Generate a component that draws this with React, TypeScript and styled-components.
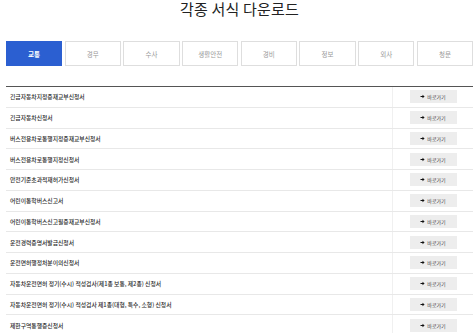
import React from 'react';
import styled, { createGlobalStyle } from 'styled-components';

const GlobalStyle = createGlobalStyle`
    html, body {
        margin: 0;
        padding: 0;
        background: #fff;
    }
    body {
        font-family: "Noto Sans CJK KR", "Noto Sans", sans-serif;
        color: #333;
    }
`;

const StyledPage = styled.div`
    width: 467px;
    margin-left: 6px;
    height: 333px;
    overflow: hidden;
`;

const StyledTitle = styled.h1`
    margin: 0;
    height: 41px;
    font-size: 15px;
    line-height: 18px;
    font-weight: 400;
    color: #222;
    text-align: center;
    letter-spacing: 0.2px;
`;

const StyledTabList = styled.ul`
    display: grid;
    grid-template-columns: repeat(8, 1fr);
    gap: 2.5px;
    margin: 0 0 20px;
    padding: 0;
    list-style: none;
`;

const StyledTab = styled.li<{ $active?: boolean }>`
    display: flex;
    align-items: center;
    justify-content: center;
    height: 25px;
    box-sizing: border-box;
    border: 1px solid ${(p) => (p.$active ? '#2b5fd1' : '#dedede')};
    background: ${(p) => (p.$active ? '#2b5fd1' : '#fff')};
    color: ${(p) => (p.$active ? '#fff' : '#999')};
    font-size: 6.5px;
    font-weight: ${(p) => (p.$active ? 700 : 400)};
`;

const StyledTable = styled.ul`
    margin: 0;
    padding: 0;
    list-style: none;
    border-top: 1.5px solid #555;
`;

const StyledRow = styled.li`
    display: flex;
    height: 20.75px;
    box-sizing: border-box;
    border-bottom: 1px solid #e8e8e8;
`;

const StyledName = styled.div`
    flex: 1;
    display: flex;
    align-items: center;
    padding-left: 4px;
    font-size: 5.8px;
    font-weight: 500;
    color: #2a2a2a;
    white-space: nowrap;
`;

const StyledCell = styled.div`
    width: 80px;
    display: flex;
    align-items: center;
    justify-content: center;
    border-left: 1px solid #f0f0f0;
`;

const StyledButton = styled.a`
    display: flex;
    align-items: center;
    justify-content: center;
    gap: 2px;
    width: 47px;
    height: 13px;
    background: #ededed;
    color: #444;
    font-size: 5px;
    text-decoration: none;
    svg {
        width: 5px;
        height: 5px;
    }
`;

const tabs = ['교통', '경무', '수사', '생활안전', '경비', '정보', '외사', '청문'];

const forms = [
    '긴급자동차지정증재교부신청서',
    '긴급자동차신청서',
    '버스전용차로통행지정증재교부신청서',
    '버스전용차로통행지정신청서',
    '안전기준초과적재허가신청서',
    '어린이통학버스신고서',
    '어린이통학버스신고필증재교부신청서',
    '운전경력증명서발급신청서',
    '운전면허행정처분이의신청서',
    '자동차운전면허 정기(수시) 적성검사(제1종 보통, 제2종) 신청서',
    '자동차운전면허 정기(수시) 적성검사 제1종(대형, 특수, 소형) 신청서',
    '제한구역통행증신청서',
];

const Arrow = () => (
    <svg viewBox="0 0 10 10">
        <path d="M1 5h6" stroke="#111" strokeWidth="2" />
        <path d="M5 1.5L9.2 5 5 8.5z" fill="#111" />
    </svg>
);

export default () => (
    <>
        <GlobalStyle />
        <StyledPage>
            <StyledTitle>각종 서식 다운로드</StyledTitle>
            <StyledTabList>
                {tabs.map((t, i) => (
                    <StyledTab key={t} $active={i === 0}>{t}</StyledTab>
                ))}
            </StyledTabList>
            <StyledTable>
                {forms.map((f) => (
                    <StyledRow key={f}>
                        <StyledName>{f}</StyledName>
                        <StyledCell>
                            <StyledButton href="#">
                                <Arrow />
                                바로가기
                            </StyledButton>
                        </StyledCell>
                    </StyledRow>
                ))}
            </StyledTable>
        </StyledPage>
    </>
);
